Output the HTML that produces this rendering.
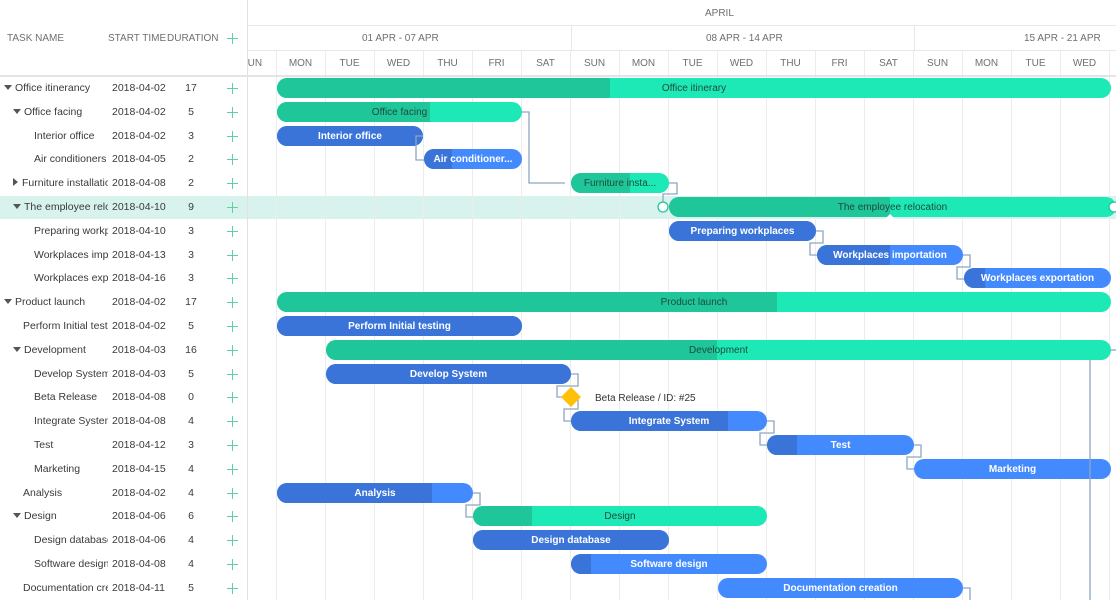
<!DOCTYPE html>
<html><head><meta charset="utf-8">
<style>
*{margin:0;padding:0;box-sizing:border-box}
body{width:1116px;height:600px;overflow:hidden;background:#fff;font-family:"Liberation Sans",sans-serif;position:relative;color:#3a3a3a}
.a{position:absolute}
.hd{font-size:10px;color:#6f6f6f;white-space:nowrap}
.cell{position:absolute;font-size:10.5px;white-space:nowrap;overflow:hidden;line-height:12px}
.plus{position:absolute;width:11px;height:11px}
.plus:before,.plus:after{content:"";position:absolute;background:#5fcfa6}
.plus:before{left:5px;top:0;width:1px;height:11px}
.plus:after{top:5px;left:0;height:1px;width:11px}
.bar{position:absolute;height:20px;border-radius:10px;overflow:hidden;font-size:10px;text-align:center;line-height:21px;white-space:nowrap}
.bar .p{position:absolute;left:0;top:0;bottom:0}
.bar span{position:relative}
.g{background:#1de9b6;color:#1f4a3c}.g .p{background:#1fc69a}
.b{background:#448aff;color:#fff;font-weight:bold}.b .p{background:#3a74d8}
.tri{display:inline-block;width:0;height:0;border-left:4px solid transparent;border-right:4px solid transparent;border-top:5px solid #555;margin-right:3px;vertical-align:1px}
.trir{display:inline-block;width:0;height:0;border-top:4px solid transparent;border-bottom:4px solid transparent;border-left:5px solid #555;margin-right:4px;vertical-align:0px}
#tl{position:absolute;left:248px;top:0;width:868px;height:600px;overflow:hidden}
</style></head><body>
<div class="a" style="left:0;top:196px;width:1116px;height:23px;background:#d8f3ee"></div>
<div id="tl"></div>
<div class="a" style="left:247px;top:0;width:1px;height:600px;background:#e2e2e2"></div>
<div class="a" style="left:0;top:75px;width:1116px;height:2px;background:#e4e4e4"></div>
<div class="a" style="left:248px;top:25px;width:868px;height:1px;background:#e8e8e8"></div>
<div class="a" style="left:248px;top:50px;width:868px;height:1px;background:#e8e8e8"></div>
<div class="a hd" style="left:7px;top:33px">TASK NAME</div>
<div class="a hd" style="left:108px;top:33px">START TIME</div>
<div class="a hd" style="left:167px;top:33px">DURATION</div>
<div class="plus" style="left:227px;top:33px"></div>
<div class="a hd" style="left:705px;top:8px">APRIL</div>
<div class="a hd" style="left:362px;top:33px">01 APR - 07 APR</div>
<div class="a hd" style="left:706px;top:33px">08 APR - 14 APR</div>
<div class="a hd" style="left:1024px;top:33px">15 APR - 21 APR</div>
<div class="a" style="left:571px;top:26px;width:1px;height:24px;background:#e8e8e8"></div>
<div class="a" style="left:914px;top:26px;width:1px;height:24px;background:#e8e8e8"></div>
<div id="root"></div>
<svg class="a" style="left:0;top:0" width="1116" height="600">
<g fill="none" stroke="#8fa6c0" stroke-width="1.3">
<polyline points="522,112 529,112 529,183 565,183"/>
<polyline points="423,136 416,136 416,160 424,160"/>
<polyline points="669,183 677,183 677,194 663,194 663,202"/>
<polyline points="816,231 823,231 823,243 810,243 810,255 817,255"/>
<polyline points="963,255 970,255 970,267 957,267 957,279 964,279"/>
<polyline points="571,374 578,374 578,386 557,386 557,397 562,397"/>
<polyline points="571,397 578,397 578,409 564,409 564,421 571,421"/>
<polyline points="767,421 774,421 774,433 760,433 760,445 767,445"/>
<polyline points="914,445 921,445 921,457 907,457 907,469 914,469"/>
<polyline points="473,493 480,493 480,505 466,505 466,517 473,517"/>
<polyline points="1111,350 1116,350"/><polyline points="1090,360 1090,600"/>
<polyline points="963,588 970,588 970,600"/>
</g>
<circle cx="663" cy="207" r="5" fill="#fff" stroke="#1fc69a" stroke-width="1.3"/>
<circle cx="1114" cy="207" r="5" fill="#fff" stroke="#1fc69a" stroke-width="1.3"/>
<polygon points="571,387 581,397 571,407 561,397" fill="#ffc107"/>
<text x="595" y="401" font-size="10" font-family="Liberation Sans" fill="#333">Beta Release / ID: #25</text>
</svg>
<script>
var r=document.getElementById('root'),h='',tl='';
var days=['SUN','MON','TUE','WED','THU','FRI','SAT'];
for(var k=-1;k<18;k++){var x=276+49*k-248;
if(k>=0)tl+='<div class="a" style="left:'+x+'px;top:51px;width:1px;height:549px;background:#ececec"></div>';
tl+='<div class="a hd" style="left:'+x+'px;top:58px;width:49px;text-align:center">'+days[(k+8)%7]+'</div>';}
document.getElementById('tl').innerHTML=tl;
var T=[[0,'Office itinerancy','2018-04-02',17,'d'],[1,'Office facing','2018-04-02',5,'d'],[2,'Interior office','2018-04-02',3],[2,'Air conditioners c','2018-04-05',2],[1,'Furniture installatio','2018-04-08',2,'r'],[1,'The employee reloc','2018-04-10',9,'d'],[2,'Preparing workpl','2018-04-10',3],[2,'Workplaces impo','2018-04-13',3],[2,'Workplaces expo','2018-04-16',3],[0,'Product launch','2018-04-02',17,'d'],[1,'Perform Initial testi','2018-04-02',5],[1,'Development','2018-04-03',16,'d'],[2,'Develop System','2018-04-03',5],[2,'Beta Release','2018-04-08',0],[2,'Integrate System','2018-04-08',4],[2,'Test','2018-04-12',3],[2,'Marketing','2018-04-15',4],[1,'Analysis','2018-04-02',4],[1,'Design','2018-04-06',6,'d'],[2,'Design database','2018-04-06',4],[2,'Software design','2018-04-08',4],[1,'Documentation crea','2018-04-11',5]];
T.forEach(function(t,i){var c=Math.round(88+23.8*i);var y=c-6;
var ind=t[0]==0?4:(t[0]==1?(t[4]?13:23):34);
var pre=t[4]=='d'?'<span class="tri"></span>':(t[4]=='r'?'<span class="trir"></span>':'');
h+='<div class="cell" style="left:'+ind+'px;top:'+y+'px;width:'+(108-ind)+'px">'+pre+t[1]+'</div>';
h+='<div class="cell" style="left:112px;top:'+y+'px">'+t[2]+'</div>';
h+='<div class="cell" style="left:170px;top:'+y+'px;width:42px;text-align:center">'+t[3]+'</div>';
h+='<div class="plus" style="left:227px;top:'+(c-5)+'px"></div>';});
var B=[[0,277,1111,610,'g','Office itinerary'],[1,277,522,430,'g','Office facing'],[2,277,423,423,'b','Interior office'],[3,424,522,452,'b','Air conditioner...'],[4,571,669,630,'g','Furniture insta...'],[5,669,1116,890,'g','The employee relocation'],[6,669,816,816,'b','Preparing workplaces'],[7,817,963,890,'b','Workplaces importation'],[8,964,1111,985,'b','Workplaces exportation'],[9,277,1111,777,'g','Product launch'],[10,277,522,522,'b','Perform Initial testing'],[11,326,1111,717,'g','Development'],[12,326,571,571,'b','Develop System'],[14,571,767,728,'b','Integrate System'],[15,767,914,797,'b','Test'],[16,914,1111,914,'b','Marketing'],[17,277,473,432,'b','Analysis'],[18,473,767,532,'g','Design'],[19,473,669,669,'b','Design database'],[20,571,767,591,'b','Software design'],[21,718,963,718,'b','Documentation creation']];
B.forEach(function(b){var c=Math.round(88+23.8*b[0]);
h+='<div class="bar '+b[4]+'" style="left:'+b[1]+'px;top:'+(c-10)+'px;width:'+(b[2]-b[1])+'px"><div class="p" style="width:'+(b[3]-b[1])+'px"></div><span>'+b[5]+'</span></div>';});
h+='<div class="a" style="left:885px;top:214px;width:0;height:0;border-left:5px solid transparent;border-right:5px solid transparent;border-bottom:5px solid #fff"></div>';
r.innerHTML=h;
</script>
</body></html>
